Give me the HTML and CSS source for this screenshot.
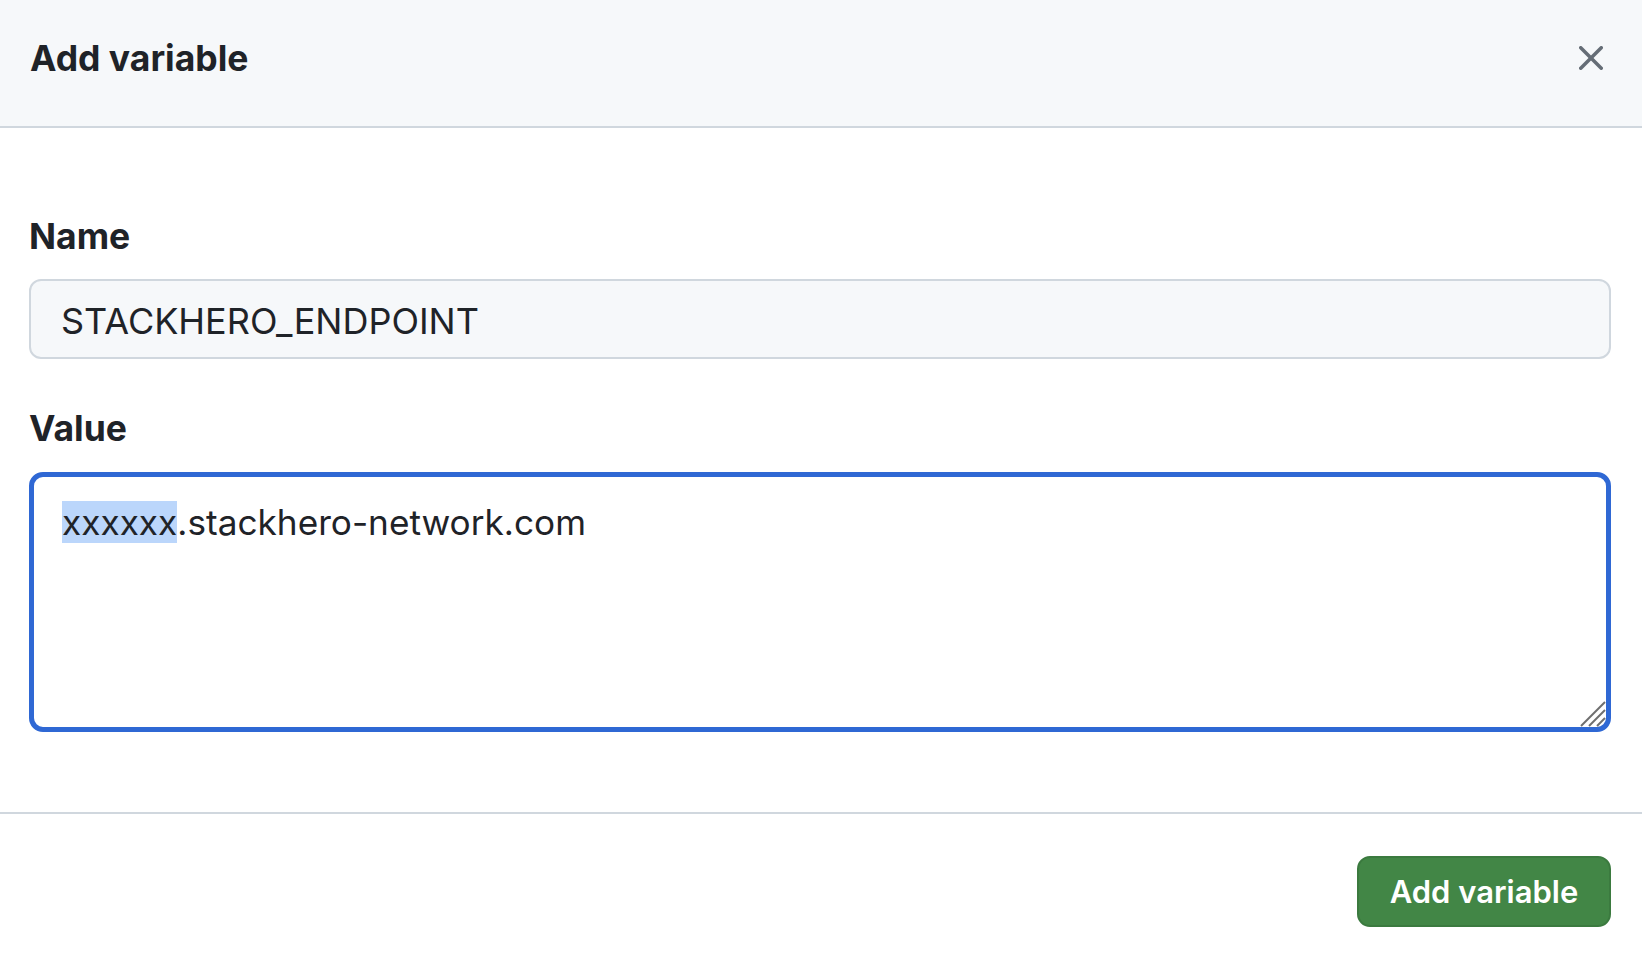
FILE: index.html
```html
<!DOCTYPE html>
<html lang="en">
<head>
<meta charset="utf-8">
<title>Add variable</title>
<link rel="stylesheet" href="styles.css">
</head>
<body>
<div class="dialog">
  <header class="dialog-header">
    <h1 class="dialog-title">Add variable</h1>
    <button class="close-btn" aria-label="Close">
      <svg width="24" height="24" viewBox="0 0 24 24" aria-hidden="true">
        <line x1="1.75" y1="1.75" x2="22.25" y2="22.25"/>
        <line x1="22.25" y1="1.75" x2="1.75" y2="22.25"/>
      </svg>
    </button>
  </header>
  <div class="dialog-body">
    <label class="field-label" for="name">Name</label>
    <input class="text-input" id="name" type="text" value="STACKHERO_ENDPOINT">
    <label class="field-label label-value">Value</label>
    <div class="textarea" role="textbox" aria-multiline="true">
      <span class="sel">xxxxxx</span>.stackhero-network.com
      <svg class="grip" width="26" height="26" viewBox="0 0 26 26" aria-hidden="true">
        <line x1="25" y1="1" x2="1" y2="25"/>
        <line x1="25" y1="9" x2="9" y2="25"/>
        <line x1="25" y1="17" x2="17" y2="25"/>
      </svg>
    </div>
  </div>
  <footer class="dialog-footer">
    <button class="primary-btn">Add variable</button>
  </footer>
</div>
</body>
</html>
```
FILE: styles.css
```css
* { box-sizing: border-box; }
html, body {
  margin: 0;
  padding: 0;
  background: #ffffff;
}
body {
  font-family: Inter, "Liberation Sans", sans-serif;
  color: #1f2328;
}
.dialog {
  width: 1642px;
  min-height: 962px;
  display: flex;
  flex-direction: column;
}
.dialog-header {
  height: 128px;
  background: #f6f8fa;
  border-bottom: 2px solid #d0d7de;
  display: flex;
  align-items: flex-start;
  justify-content: space-between;
  padding: 35px 39px 0 30px;
}
.dialog-title {
  margin: 0;
  font-size: 35.5px;
  line-height: 48px;
  font-weight: 700;
}
.close-btn {
  margin-top: 11px;
  padding: 0;
  border: 0;
  background: transparent;
  width: 24px;
  height: 24px;
  display: flex;
}
.close-btn svg line {
  stroke: #656d76;
  stroke-width: 3.5;
  stroke-linecap: round;
}
.dialog-body {
  padding: 87px 31px 0 29px;
  display: flex;
  flex-direction: column;
}
.field-label {
  font-size: 35.5px;
  line-height: 44px;
  font-weight: 700;
  color: #1f2328;
}
.label-value {
  margin-top: 48px;
}
.text-input {
  margin-top: 20px;
  height: 80px;
  width: 100%;
  border: 2px solid #d0d7de;
  border-radius: 12px;
  background: #f6f8fa;
  padding: 4px 30px 0;
  font-family: Inter, "Liberation Sans", sans-serif;
  font-size: 36px;
  color: #1f2328;
  outline: none;
}
.textarea {
  position: relative;
  margin-top: 21px;
  height: 260px;
  width: 100%;
  border: 5px solid #2f68d4;
  border-radius: 14px;
  background: #ffffff;
  padding: 23px 28px;
  font-size: 35.2px;
  line-height: 44px;
  color: #1f2328;
}
.sel {
  background: #bbd6fb;
}
.grip {
  position: absolute;
  right: 0;
  bottom: 0;
}
.grip line {
  stroke: #6e6e6e;
  stroke-width: 2;
}
.dialog-footer {
  margin-top: 80px;
  border-top: 2px solid #d0d7de;
  padding: 42px 31px 0 0;
  display: flex;
  justify-content: flex-end;
}
.primary-btn {
  width: 254px;
  height: 71px;
  background: #428646;
  border: 2px solid #3b7a3f;
  border-radius: 13px;
  color: #ffffff;
  font-family: Inter, "Liberation Sans", sans-serif;
  font-size: 31px;
  font-weight: 600;
  padding: 0;
}
```
